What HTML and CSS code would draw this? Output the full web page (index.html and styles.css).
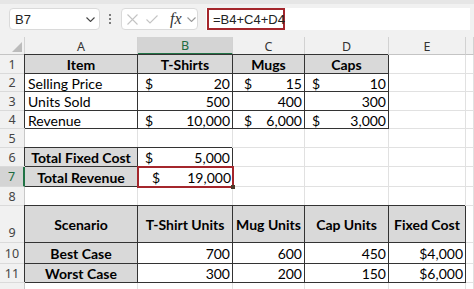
FILE: index.html
```html
<!DOCTYPE html>
<html lang="en">
<head>
  <meta charset="UTF-8" />
  <title>Revenue sheet</title>
  <link rel="stylesheet" href="styles.css">
</head>
<body>

  <!-- formula bar -->
  <div class="toolbar">
    <div class="namebox">
      <span>B7</span>
      <svg class="chev" width="9" height="5" viewBox="0 0 9 5"><path d="M0.5 0.5 L4.5 4.5 L8.5 0.5" fill="none" stroke="#444" stroke-width="1.1"/></svg>
    </div>
    <div class="dots"><i></i><i></i><i></i></div>
    <div class="fxbox">
      <svg class="ico-x" width="11" height="11" viewBox="0 0 11 11"><path d="M0.5 0.5 L10.5 10.5 M10.5 0.5 L0.5 10.5" stroke="#c4c4c4" stroke-width="1.1"/></svg>
      <svg class="ico-ok" width="12" height="9" viewBox="0 0 12 9"><path d="M0.5 4.5 L4 8 L11.5 0.5" fill="none" stroke="#c4c4c4" stroke-width="1.1"/></svg>
      <span class="fx">fx</span>
      <svg class="chev" width="9" height="5" viewBox="0 0 9 5"><path d="M0.5 0.5 L4.5 4.5 L8.5 0.5" fill="none" stroke="#999" stroke-width="1.1"/></svg>
    </div>
    <div class="formula"><span class="formula-text">=B4+C4+D4</span></div>
  </div>

  <!-- grid -->
  <div class="sheet">
    <div class="cell corner"><svg width="10" height="10" viewBox="0 0 10 10"><path d="M10 0 L10 10 L0 10 Z" fill="#bcbcbc"/></svg></div>
    <div class="cell colhead">A</div>
    <div class="cell colhead sel">B</div>
    <div class="cell colhead">C</div>
    <div class="cell colhead">D</div>
    <div class="cell colhead">E</div>
    <div class="cell colhead"></div>

    <div class="cell rowhead">1</div>
    <div class="cell t th">Item</div>
    <div class="cell t th">T-Shirts</div>
    <div class="cell t th">Mugs</div>
    <div class="cell t th">Caps</div>
    <div class="cell"></div>
    <div class="cell"></div>

    <div class="cell rowhead">2</div>
    <div class="cell t">Selling Price</div>
    <div class="cell t acct"><span>$</span><span>20</span></div>
    <div class="cell t acct wide"><span>$</span><span>15</span></div>
    <div class="cell t acct"><span>$</span><span>10</span></div>
    <div class="cell"></div>
    <div class="cell"></div>

    <div class="cell rowhead">3</div>
    <div class="cell t">Units Sold</div>
    <div class="cell t num">500</div>
    <div class="cell t num">400</div>
    <div class="cell t num">300</div>
    <div class="cell"></div>
    <div class="cell"></div>

    <div class="cell rowhead">4</div>
    <div class="cell t">Revenue</div>
    <div class="cell t acct"><span>$</span><span>10,000</span></div>
    <div class="cell t acct wide"><span>$</span><span>6,000</span></div>
    <div class="cell t acct"><span>$</span><span>3,000</span></div>
    <div class="cell"></div>
    <div class="cell"></div>

    <div class="cell rowhead">5</div>
    <div class="cell"></div>
    <div class="cell"></div>
    <div class="cell"></div>
    <div class="cell"></div>
    <div class="cell"></div>
    <div class="cell"></div>

    <div class="cell rowhead">6</div>
    <div class="cell t th">Total Fixed Cost</div>
    <div class="cell t acct"><span>$</span><span>5,000</span></div>
    <div class="cell"></div>
    <div class="cell"></div>
    <div class="cell"></div>
    <div class="cell"></div>

    <div class="cell rowhead sel">7</div>
    <div class="cell t th no-left">Total Revenue</div>
    <div class="cell t acct picked"><span>$</span><span>19,000</span></div>
    <div class="cell"></div>
    <div class="cell"></div>
    <div class="cell"></div>
    <div class="cell"></div>

    <div class="cell rowhead">8</div>
    <div class="cell"></div>
    <div class="cell"></div>
    <div class="cell"></div>
    <div class="cell"></div>
    <div class="cell"></div>
    <div class="cell"></div>

    <div class="cell rowhead tall">9</div>
    <div class="cell t th">Scenario</div>
    <div class="cell t th">T-Shirt Units</div>
    <div class="cell t th">Mug Units</div>
    <div class="cell t th">Cap Units</div>
    <div class="cell t th">Fixed Cost</div>
    <div class="cell"></div>

    <div class="cell rowhead">10</div>
    <div class="cell t th">Best Case</div>
    <div class="cell t num">700</div>
    <div class="cell t num">600</div>
    <div class="cell t num">450</div>
    <div class="cell t num">$4,000</div>
    <div class="cell"></div>

    <div class="cell rowhead">11</div>
    <div class="cell t th">Worst Case</div>
    <div class="cell t num">300</div>
    <div class="cell t num">200</div>
    <div class="cell t num">150</div>
    <div class="cell t num">$6,000</div>
    <div class="cell"></div>

    <div class="cell rowhead"></div>
    <div class="cell"></div>
    <div class="cell"></div>
    <div class="cell"></div>
    <div class="cell"></div>
    <div class="cell"></div>
    <div class="cell"></div>
  </div>

</body>
</html>
```

FILE: styles.css
```css
/* ---------- base ---------- */
* {
  box-sizing: border-box;
}

body {
  margin: 0;
  width: 474px;
  height: 289px;
  overflow: hidden;
  background: #fff;
  font-family: Lato, "Liberation Sans", sans-serif;
}

/* ---------- formula bar ---------- */
.toolbar {
  display: flex;
  align-items: flex-start;
  height: 37px;
  padding: 4px 0 0 9px;
  background: #f1f1f1;
  border-top: 4px solid #e6e6e6;
  font-family: "Liberation Sans", sans-serif;
  font-size: 13px;
  color: #222;
}

.namebox {
  display: flex;
  align-items: center;
  justify-content: space-between;
  width: 91px;
  height: 22px;
  padding: 0 4px 0 5px;
  background: #fff;
  border: 1px solid #dadada;
  border-radius: 4px;
}

.dots {
  display: flex;
  flex-direction: column;
  gap: 2px;
  margin: 6px 10px 0 9px;
}
.dots i {
  width: 2px;
  height: 2px;
  background: #555;
  border-radius: 50%;
}

.fxbox {
  display: flex;
  align-items: center;
  width: 77px;
  height: 22px;
  padding-left: 5px;
  background: #fff;
  border: 1px solid #dadada;
  border-radius: 4px;
}
.ico-x {
  margin-right: 8px;
}
.ico-ok {
  margin-right: 12px;
}
.fx {
  width: 15px;
  font-family: "Liberation Serif", serif;
  font-style: italic;
  font-size: 16px;
  color: #333;
}
.fxbox .chev {
  margin-left: 2px;
}

.formula {
  width: 264px;
  height: 22px;
  margin-left: 8px;
  background: #fff;
}
.formula-text {
  display: flex;
  align-items: center;
  width: 78px;
  height: 22px;
  margin-left: 1px;
  padding-left: 4px;
  border: 2px solid #a4262c;
}

/* ---------- sheet ---------- */
.sheet {
  display: grid;
  grid-template-columns: 25px 113px 95px 72px 84px 77px 8px;
  grid-template-rows: 18px 19px 18px 19px 18px 19px 19px 20px 19px 37px 21px 19px 19px;
}

.cell {
  display: flex;
  align-items: center;
  padding: 1px 3px 0;
  border-right: 1px solid #e1e1e1;
  border-bottom: 1px solid #e1e1e1;
  font-size: 14px;
  color: #000;
  white-space: nowrap;
}

.corner {
  justify-content: flex-end;
  align-items: flex-end;
  padding: 0 2px 2px 0;
  background: #f1f1f1;
  border-right-color: #d2d2d2;
  border-bottom-color: #c4c4c4;
}

.colhead {
  justify-content: center;
  background: #f1f1f1;
  border-right-color: #d2d2d2;
  border-bottom-color: #c4c4c4;
  font-family: "Noto Sans", sans-serif;
  font-size: 12.5px;
  color: #333;
}
.colhead.sel {
  background: #d4d4d4;
  color: #1e6b40;
  border-bottom: 2px solid #217346;
}

.rowhead {
  justify-content: center;
  padding: 0;
  background: #f1f1f1;
  border-right-color: #c8c8c8;
  border-bottom-color: #dadada;
  font-family: "Noto Sans", sans-serif;
  font-size: 12.5px;
  color: #444;
}
.rowhead.sel {
  background: #d4d4d4;
  color: #1e6b40;
  border-right: 2px solid #217346;
}
.rowhead.tall {
  align-items: flex-end;
  padding-bottom: 1px;
}

/* table borders: own right/bottom + shadow for top/left */
.t {
  border-right-color: #333;
  border-bottom-color: #333;
  box-shadow: -1px -1px 0 #333;
}
.t.no-left {
  box-shadow: 0 -1px 0 #333;
}

.th {
  justify-content: center;
  background: #d9d9d9;
  font-weight: 700;
}

.num {
  justify-content: flex-end;
  padding-right: 2px;
}

.acct {
  justify-content: space-between;
  padding: 1px 2px 0 7px;
}
.acct.wide {
  padding-left: 11px;
}

/* selected cell with the red mark */
.picked {
  position: relative;
  padding-left: 14px;
  padding-right: 1px;
}
.picked::after {
  content: "";
  position: absolute;
  top: -1px;
  left: -1px;
  right: -2px;
  bottom: -2px;
  border: 2px solid #a4262c;
}
.picked::before {
  content: "";
  position: absolute;
  right: -3px;
  bottom: -3px;
  width: 4px;
  height: 4px;
  background: #4a3a2a;
  z-index: 1;
}
```
